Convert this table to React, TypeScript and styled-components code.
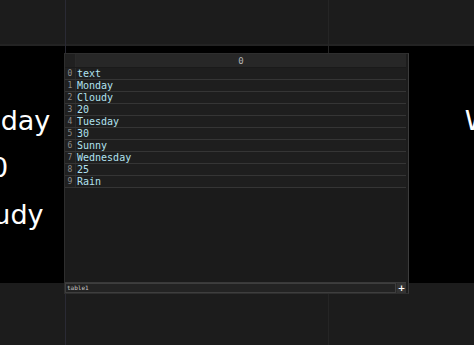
import React from "react";
import styled, { createGlobalStyle } from "styled-components";

const GlobalStyle = createGlobalStyle`
  html, body {
    margin: 0;
    padding: 0;
    background: #1c1c1c;
    overflow: hidden;
  }
`;

const rows = [
  "text",
  "Monday",
  "Cloudy",
  "20",
  "Tuesday",
  "30",
  "Sunny",
  "Wednesday",
  "25",
  "Rain",
];

const leftLines = [
  { text: "Monday", shift: 0 },
  { text: "20", shift: -6 },
  { text: "Cloudy", shift: 0 },
];

export default function App() {
  return (
    <>
      <GlobalStyle />
      <Viewer>
        <TopStrip />
        <Canvas>
          <BigText x={-3} y={51}>
            {leftLines.map((l) => (
              <BigLine key={l.text} shift={l.shift}>
                {l.text}
              </BigLine>
            ))}
          </BigText>
          <BigText x={543} y={51}>
            <BigLine shift={0}>Wednesday</BigLine>
            <BigLine shift={0}>25</BigLine>
            <BigLine shift={0}>Rain</BigLine>
          </BigText>
        </Canvas>
        <BottomStrip />
        <Guide x={65} tint="#2a2a34" />
        <Guide x={328} tint="#252525" />

        <Panel>
          <HeaderRow>
            <IndexCell />
            <HeaderCell>0</HeaderCell>
          </HeaderRow>
          {rows.map((r, i) => (
            <Row key={i}>
              <IndexCell>{i}</IndexCell>
              <Cell>{r}</Cell>
            </Row>
          ))}
          <Body />
          <Footer>
            <NameField>table1</NameField>
            <AddButton>+</AddButton>
          </Footer>
        </Panel>
      </Viewer>
    </>
  );
}

const Viewer = styled.div`
  position: relative;
  width: 474px;
  height: 345px;
  display: flex;
  flex-direction: column;
  overflow: hidden;
  background: #1c1c1c;
`;

const TopStrip = styled.div`
  height: 44px;
  border-bottom: 2px solid #232323;
  background: #1c1c1c;
`;

const Canvas = styled.div`
  position: relative;
  height: 237px;
  background: #000;
  overflow: hidden;
`;

const BottomStrip = styled.div`
  flex: 1;
  background: #1c1c1c;
`;

const Guide = styled.div<{ x: number; tint: string }>`
  position: absolute;
  top: 0;
  bottom: 0;
  left: ${(p) => p.x}px;
  width: 1px;
  background: ${(p) => p.tint};
`;

const BigText = styled.div<{ x: number; y: number }>`
  position: absolute;
  left: ${(p) => p.x}px;
  top: ${(p) => p.y}px;
  display: flex;
  flex-direction: column;
  align-items: center;
  transform: translateX(-50%);
  font-family: "DejaVu Sans", sans-serif;
  font-size: 27px;
  line-height: 47px;
  color: #fff;
  white-space: nowrap;
`;

const BigLine = styled.div<{ shift: number }>`
  margin-left: ${(p) => p.shift * 2}px;
`;

const Panel = styled.div`
  position: absolute;
  left: 64px;
  top: 53px;
  width: 345px;
  height: 241px;
  box-sizing: border-box;
  border: 1px solid #2e2e2e;
  border-right-color: #3c3c3c;
  background: #1c1c1c;
  display: flex;
  flex-direction: column;
  padding-right: 2px;
`;

const HeaderRow = styled.div`
  display: flex;
  height: 13px;
  background: #272727;
  border-bottom: 1px solid #1a1a1a;
`;

const Row = styled.div`
  display: flex;
  height: 11px;
  border-bottom: 1px solid #353535;
  background: #1e1e1e;
`;

const IndexCell = styled.div`
  width: 10px;
  flex: none;
  font-family: "DejaVu Sans Mono", monospace;
  font-size: 8px;
  line-height: 12px;
  color: #8c8c8c;
  text-align: center;
  background: #202020;
  border-right: 1px solid #2a2a2a;
`;

const HeaderCell = styled.div`
  flex: 1;
  text-align: center;
  font-family: "DejaVu Sans Mono", monospace;
  font-size: 9px;
  line-height: 14px;
  color: #b4b4b4;
`;

const Cell = styled.div`
  flex: 1;
  padding-left: 1px;
  font-family: "DejaVu Sans Mono", monospace;
  font-size: 10px;
  line-height: 12px;
  color: #b2e2f0;
  white-space: nowrap;
`;

const Body = styled.div`
  flex: 1;
  background: #1b1b1b;
`;

const Footer = styled.div`
  display: flex;
  height: 10px;
  gap: 1px;
  background: #2a2a2a;
  border-top: 1px solid #3a3a3a;
`;

const NameField = styled.div`
  flex: 1;
  background: #232323;
  border: 1px solid #3e3e3e;
  font-family: "DejaVu Sans Mono", monospace;
  font-size: 6px;
  line-height: 8px;
  color: #c8c8c8;
  padding-left: 1px;
`;

const AddButton = styled.div`
  width: 9px;
  background: #333;
  color: #fff;
  font-family: "DejaVu Sans", sans-serif;
  font-size: 9px;
  font-weight: bold;
  line-height: 10px;
  text-align: center;
`;
